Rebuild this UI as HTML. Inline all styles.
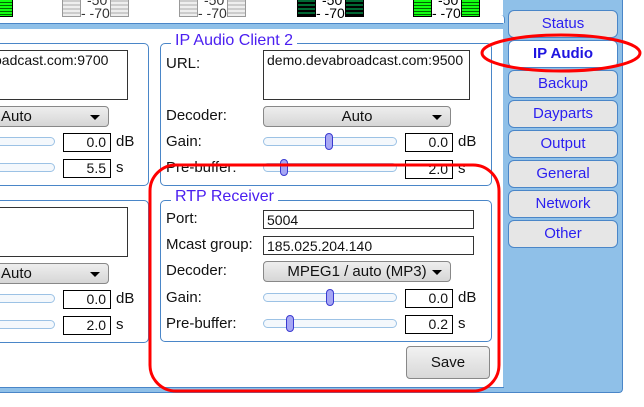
<!DOCTYPE html><html><head><style>
*{box-sizing:border-box}
body{margin:0;width:644px;height:407px;overflow:hidden;background:#fff;font-family:"Liberation Sans",sans-serif;font-size:14px;color:#111;position:relative}
.a{position:absolute}
.m{position:absolute;top:0;width:19px;height:17px;border:1px solid #999;border-top:none;background:repeating-linear-gradient(#ccc 0 2px,#eee 2px 4px)}
.m.d{border-color:#000;background:repeating-linear-gradient(#063 0 2px,#000 2px 4px)}
.m.g{border-color:#000;background:repeating-linear-gradient(#1f1 0 2px,#060 2px 3px)}
.lbl{position:absolute;font-size:14px;color:#333;white-space:pre}
.tab{position:absolute;left:508px;width:110px;height:28px;border:1px solid #4a86c8;border-radius:6px;background:#e6e6e6;color:#2a1ef0;text-align:center;line-height:26px;font-size:15px}
.fs{position:absolute;border:1px solid #4a86c8;border-radius:5px}
.lg{position:absolute;background:#fff;color:#4b1ff0;font-size:16px;padding:0 4px}
.ta{position:absolute;border:1px solid #333;background:#fff;font-size:14px;padding:2px 3px;line-height:15px}
.sel{position:absolute;height:21px;border:1px solid #888;border-radius:4px;background:linear-gradient(#eee,#d6d6d6);text-align:center;line-height:19px;font-size:15px}
.sel:after{content:"";position:absolute;right:8px;top:8px;border:5px solid transparent;border-top:5px solid #000;border-bottom:0}
.tr{position:absolute;height:9px;border:1px solid #9cc2e5;border-radius:5px;background:#f4f8fc}
.th{position:absolute;width:8px;height:17px;border:1.5px solid #3a3ad0;border-radius:4px;background:#a7a7f4}
.in{position:absolute;height:19px;border:1px solid #000;background:#fff;text-align:right;padding-right:4px;line-height:17px;font-size:14px}
.t{position:absolute;font-size:15px}
</style></head><body>
<div class="m g" style="left:0;width:13px;border-left:none"></div>
<div class="m" style="left:62px"></div><div class="lbl" style="left:87px;top:-8px">-50</div><div class="lbl" style="left:81px;top:5px">- -70 -</div><div class="m" style="left:110px"></div>
<div class="m" style="left:179px"></div><div class="lbl" style="left:204px;top:-8px">-50</div><div class="lbl" style="left:198px;top:5px">- -70 -</div><div class="m" style="left:227px"></div>
<div class="m d" style="left:297px"></div><div class="lbl" style="left:322px;top:-8px;color:#000">-50</div><div class="lbl" style="left:316px;top:5px;color:#000">- -70 -</div><div class="m d" style="left:345px"></div>
<div class="m g" style="left:413px"></div><div class="lbl" style="left:438px;top:-8px;color:#000">-50</div><div class="lbl" style="left:432px;top:5px;color:#000">- -70 -</div><div class="m g" style="left:461px"></div>
<div class="a" style="left:-2px;top:23px;width:508px;height:6px;background:#8fc0e8;border-top:1px solid #4a86c8"></div>
<div class="a" style="left:503px;top:-5px;width:120px;height:398px;background:#8fc0e8;border-right:1px solid #4a86c8;border-bottom:1px solid #4a86c8;border-radius:0 0 4px 0"></div>
<div class="a" style="left:-2px;top:387px;width:506px;height:6px;background:#8fc0e8;border-top:1px solid #4a86c8;border-bottom:1px solid #4a86c8"></div>
<div class="a" style="left:-2px;top:29px;width:503px;height:358px;background:#fff;border-radius:0 5px 5px 0"></div>
<div class="a" style="left:498px;top:15px;width:7px;height:8px;background:#fff;border-radius:0 4px 0 0;border-right:1px solid #4a86c8"></div>
<div class="tab" style="top:10px">Status</div>
<div class="tab" style="top:40px;background:#fff;font-weight:bold;color:#1e14e0">IP Audio</div>
<div class="tab" style="top:70px">Backup</div>
<div class="tab" style="top:100px">Dayparts</div>
<div class="tab" style="top:130px">Output</div>
<div class="tab" style="top:160px">General</div>
<div class="tab" style="top:190px">Network</div>
<div class="tab" style="top:220px">Other</div>
<div class="fs" style="left:-10px;top:43px;width:159px;height:143px"></div>
<div class="ta" style="left:-10px;top:50px;width:138px;height:50px">oadcast.com:9700</div>
<div class="sel" style="left:-10px;top:106px;width:119px;text-align:left;padding-left:10px">Auto</div>
<div class="tr" style="left:-10px;top:137px;width:65px"></div>
<div class="in" style="left:63px;top:133px;width:48px">0.0</div><div class="t" style="left:116px;top:133px">dB</div>
<div class="tr" style="left:-10px;top:163px;width:65px"></div>
<div class="in" style="left:63px;top:159px;width:48px">5.5</div><div class="t" style="left:116px;top:159px">s</div>
<div class="fs" style="left:-10px;top:200px;width:159px;height:143px"></div>
<div class="ta" style="left:-10px;top:207px;width:138px;height:50px"></div>
<div class="sel" style="left:-10px;top:263px;width:119px;text-align:left;padding-left:10px">Auto</div>
<div class="tr" style="left:-10px;top:294px;width:65px"></div>
<div class="in" style="left:63px;top:290px;width:48px">0.0</div><div class="t" style="left:116px;top:290px">dB</div>
<div class="tr" style="left:-10px;top:320px;width:65px"></div>
<div class="in" style="left:63px;top:316px;width:48px">2.0</div><div class="t" style="left:116px;top:316px">s</div>
<div class="fs" style="left:160px;top:43px;width:332px;height:143px"></div>
<div class="lg" style="left:171px;top:32px">IP Audio Client 2</div>
<div class="t" style="left:166px;top:55px">URL:</div>
<div class="ta" style="left:263px;top:50px;width:207px;height:50px">demo.devabroadcast.com:9500</div>
<div class="t" style="left:166px;top:107px">Decoder:</div>
<div class="sel" style="left:263px;top:106px;width:188px">Auto</div>
<div class="t" style="left:166px;top:133px">Gain:</div>
<div class="tr" style="left:263px;top:137px;width:134px"></div><div class="th" style="left:325px;top:133px"></div>
<div class="in" style="left:405px;top:133px;width:48px">0.0</div><div class="t" style="left:458px;top:133px">dB</div>
<div class="t" style="left:166px;top:159px">Pre-buffer:</div>
<div class="tr" style="left:263px;top:163px;width:134px"></div><div class="th" style="left:280px;top:159px"></div>
<div class="in" style="left:405px;top:160px;width:48px">2.0</div><div class="t" style="left:458px;top:160px">s</div>
<div class="fs" style="left:160px;top:200px;width:332px;height:142px"></div>
<div class="lg" style="left:171px;top:188px">RTP Receiver</div>
<div class="t" style="left:166px;top:210px">Port:</div>
<div class="ta" style="left:263px;top:210px;width:211px;height:19px">5004</div>
<div class="t" style="left:166px;top:236px">Mcast group:</div>
<div class="ta" style="left:263px;top:236px;width:211px;height:19px">185.025.204.140</div>
<div class="t" style="left:166px;top:262px">Decoder:</div>
<div class="sel" style="left:263px;top:261px;width:188px">MPEG1 / auto (MP3)</div>
<div class="t" style="left:166px;top:289px">Gain:</div>
<div class="tr" style="left:263px;top:293px;width:134px"></div><div class="th" style="left:326px;top:289px"></div>
<div class="in" style="left:405px;top:289px;width:48px">0.0</div><div class="t" style="left:458px;top:289px">dB</div>
<div class="t" style="left:166px;top:315px">Pre-buffer:</div>
<div class="tr" style="left:263px;top:319px;width:134px"></div><div class="th" style="left:286px;top:315px"></div>
<div class="in" style="left:405px;top:315px;width:48px">0.2</div><div class="t" style="left:458px;top:315px">s</div>
<div class="a" style="left:406px;top:346px;width:84px;height:33px;border:1px solid #888;border-radius:4px;background:linear-gradient(#f2f2f2,#d8d8d8);text-align:center;line-height:31px;font-size:15px">Save</div>
<svg class="a" style="left:0;top:0" width="644" height="407">
<rect x="150" y="165" width="349" height="226" rx="26" fill="none" stroke="#f00" stroke-width="3"/>
<ellipse cx="561" cy="53" rx="79" ry="18" fill="none" stroke="#f00" stroke-width="3"/>
</svg>
</body></html>
